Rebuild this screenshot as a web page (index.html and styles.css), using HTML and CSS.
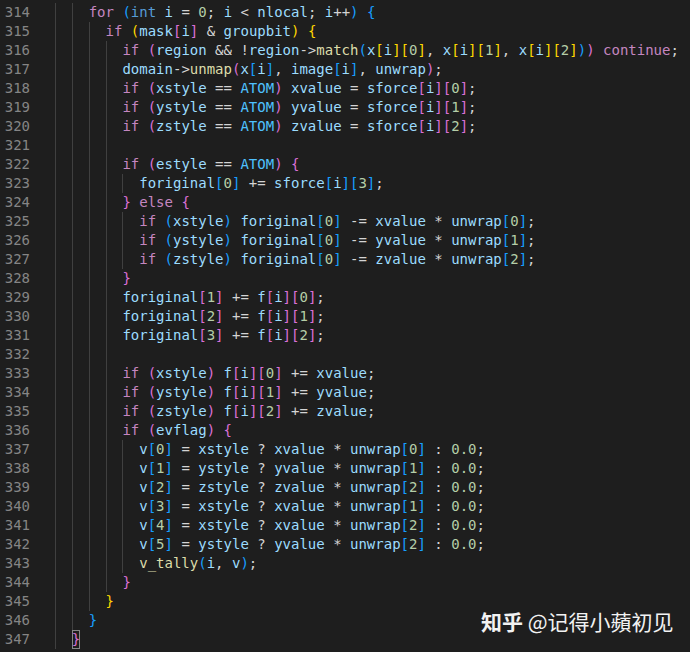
FILE: index.html
```html
<!DOCTYPE html>
<html lang="en">
<head>
<meta charset="utf-8">
<title>Editor</title>
<link rel="stylesheet" href="styles.css">
</head>
<body>
<div class="editor">
  <div class="ln">
    <div>314</div><div>315</div><div>316</div><div>317</div><div>318</div><div>319</div><div>320</div><div>321</div><div>322</div><div>323</div><div>324</div><div>325</div><div>326</div><div>327</div><div>328</div><div>329</div><div>330</div><div>331</div><div>332</div><div>333</div><div>334</div><div>335</div><div>336</div><div>337</div><div>338</div><div>339</div><div>340</div><div>341</div><div>342</div><div>343</div><div>344</div><div>345</div><div>346</div><div>347</div>
  </div>
  <div class="code">
<div class="row"><i class="g"></i><i class="g"></i><span class="k">for</span> <span class="b3">(</span><span class="t">int</span> <span class="v">i</span> = <span class="n">0</span>; <span class="v">i</span> &lt; <span class="v">nlocal</span>; <span class="v">i</span>++<span class="b3">)</span> <span class="b3">{</span></div>
<div class="row"><i class="g"></i><i class="g"></i><i class="g"></i><span class="k">if</span> <span class="b1">(</span><span class="v">mask</span><span class="b2">[</span><span class="v">i</span><span class="b2">]</span> &amp; <span class="v">groupbit</span><span class="b1">)</span> <span class="b1">{</span></div>
<div class="row"><i class="g"></i><i class="g"></i><i class="g"></i><i class="g"></i><span class="k">if</span> <span class="b2">(</span><span class="v">region</span> &amp;&amp; !<span class="v">region</span>-&gt;<span class="f">match</span><span class="b3">(</span><span class="v">x</span><span class="b1">[</span><span class="v">i</span><span class="b1">][</span><span class="n">0</span><span class="b1">]</span>, <span class="v">x</span><span class="b1">[</span><span class="v">i</span><span class="b1">][</span><span class="n">1</span><span class="b1">]</span>, <span class="v">x</span><span class="b1">[</span><span class="v">i</span><span class="b1">][</span><span class="n">2</span><span class="b1">]</span><span class="b3">)</span><span class="b2">)</span> <span class="k">continue</span>;</div>
<div class="row"><i class="g"></i><i class="g"></i><i class="g"></i><i class="g"></i><span class="v">domain</span>-&gt;<span class="f">unmap</span><span class="b2">(</span><span class="v">x</span><span class="b3">[</span><span class="v">i</span><span class="b3">]</span>, <span class="v">image</span><span class="b3">[</span><span class="v">i</span><span class="b3">]</span>, <span class="v">unwrap</span><span class="b2">)</span>;</div>
<div class="row"><i class="g"></i><i class="g"></i><i class="g"></i><i class="g"></i><span class="k">if</span> <span class="b2">(</span><span class="v">xstyle</span> == <span class="c">ATOM</span><span class="b2">)</span> <span class="v">xvalue</span> = <span class="v">sforce</span><span class="b2">[</span><span class="v">i</span><span class="b2">][</span><span class="n">0</span><span class="b2">]</span>;</div>
<div class="row"><i class="g"></i><i class="g"></i><i class="g"></i><i class="g"></i><span class="k">if</span> <span class="b2">(</span><span class="v">ystyle</span> == <span class="c">ATOM</span><span class="b2">)</span> <span class="v">yvalue</span> = <span class="v">sforce</span><span class="b2">[</span><span class="v">i</span><span class="b2">][</span><span class="n">1</span><span class="b2">]</span>;</div>
<div class="row"><i class="g"></i><i class="g"></i><i class="g"></i><i class="g"></i><span class="k">if</span> <span class="b2">(</span><span class="v">zstyle</span> == <span class="c">ATOM</span><span class="b2">)</span> <span class="v">zvalue</span> = <span class="v">sforce</span><span class="b2">[</span><span class="v">i</span><span class="b2">][</span><span class="n">2</span><span class="b2">]</span>;</div>
<div class="row"><i class="g"></i><i class="g"></i><i class="g"></i><i class="g"></i></div>
<div class="row"><i class="g"></i><i class="g"></i><i class="g"></i><i class="g"></i><span class="k">if</span> <span class="b2">(</span><span class="v">estyle</span> == <span class="c">ATOM</span><span class="b2">)</span> <span class="b2">{</span></div>
<div class="row"><i class="g"></i><i class="g"></i><i class="g"></i><i class="g"></i><i class="g"></i><span class="v">foriginal</span><span class="b3">[</span><span class="n">0</span><span class="b3">]</span> += <span class="v">sforce</span><span class="b3">[</span><span class="v">i</span><span class="b3">][</span><span class="n">3</span><span class="b3">]</span>;</div>
<div class="row"><i class="g"></i><i class="g"></i><i class="g"></i><i class="g"></i><span class="b2">}</span> <span class="k">else</span> <span class="b2">{</span></div>
<div class="row"><i class="g"></i><i class="g"></i><i class="g"></i><i class="g"></i><i class="g"></i><span class="k">if</span> <span class="b3">(</span><span class="v">xstyle</span><span class="b3">)</span> <span class="v">foriginal</span><span class="b3">[</span><span class="n">0</span><span class="b3">]</span> -= <span class="v">xvalue</span> * <span class="v">unwrap</span><span class="b3">[</span><span class="n">0</span><span class="b3">]</span>;</div>
<div class="row"><i class="g"></i><i class="g"></i><i class="g"></i><i class="g"></i><i class="g"></i><span class="k">if</span> <span class="b3">(</span><span class="v">ystyle</span><span class="b3">)</span> <span class="v">foriginal</span><span class="b3">[</span><span class="n">0</span><span class="b3">]</span> -= <span class="v">yvalue</span> * <span class="v">unwrap</span><span class="b3">[</span><span class="n">1</span><span class="b3">]</span>;</div>
<div class="row"><i class="g"></i><i class="g"></i><i class="g"></i><i class="g"></i><i class="g"></i><span class="k">if</span> <span class="b3">(</span><span class="v">zstyle</span><span class="b3">)</span> <span class="v">foriginal</span><span class="b3">[</span><span class="n">0</span><span class="b3">]</span> -= <span class="v">zvalue</span> * <span class="v">unwrap</span><span class="b3">[</span><span class="n">2</span><span class="b3">]</span>;</div>
<div class="row"><i class="g"></i><i class="g"></i><i class="g"></i><i class="g"></i><span class="b2">}</span></div>
<div class="row"><i class="g"></i><i class="g"></i><i class="g"></i><i class="g"></i><span class="v">foriginal</span><span class="b2">[</span><span class="n">1</span><span class="b2">]</span> += <span class="v">f</span><span class="b2">[</span><span class="v">i</span><span class="b2">][</span><span class="n">0</span><span class="b2">]</span>;</div>
<div class="row"><i class="g"></i><i class="g"></i><i class="g"></i><i class="g"></i><span class="v">foriginal</span><span class="b2">[</span><span class="n">2</span><span class="b2">]</span> += <span class="v">f</span><span class="b2">[</span><span class="v">i</span><span class="b2">][</span><span class="n">1</span><span class="b2">]</span>;</div>
<div class="row"><i class="g"></i><i class="g"></i><i class="g"></i><i class="g"></i><span class="v">foriginal</span><span class="b2">[</span><span class="n">3</span><span class="b2">]</span> += <span class="v">f</span><span class="b2">[</span><span class="v">i</span><span class="b2">][</span><span class="n">2</span><span class="b2">]</span>;</div>
<div class="row"><i class="g"></i><i class="g"></i><i class="g"></i><i class="g"></i></div>
<div class="row"><i class="g"></i><i class="g"></i><i class="g"></i><i class="g"></i><span class="k">if</span> <span class="b2">(</span><span class="v">xstyle</span><span class="b2">)</span> <span class="v">f</span><span class="b2">[</span><span class="v">i</span><span class="b2">][</span><span class="n">0</span><span class="b2">]</span> += <span class="v">xvalue</span>;</div>
<div class="row"><i class="g"></i><i class="g"></i><i class="g"></i><i class="g"></i><span class="k">if</span> <span class="b2">(</span><span class="v">ystyle</span><span class="b2">)</span> <span class="v">f</span><span class="b2">[</span><span class="v">i</span><span class="b2">][</span><span class="n">1</span><span class="b2">]</span> += <span class="v">yvalue</span>;</div>
<div class="row"><i class="g"></i><i class="g"></i><i class="g"></i><i class="g"></i><span class="k">if</span> <span class="b2">(</span><span class="v">zstyle</span><span class="b2">)</span> <span class="v">f</span><span class="b2">[</span><span class="v">i</span><span class="b2">][</span><span class="n">2</span><span class="b2">]</span> += <span class="v">zvalue</span>;</div>
<div class="row"><i class="g"></i><i class="g"></i><i class="g"></i><i class="g"></i><span class="k">if</span> <span class="b2">(</span><span class="v">evflag</span><span class="b2">)</span> <span class="b2">{</span></div>
<div class="row"><i class="g"></i><i class="g"></i><i class="g"></i><i class="g"></i><i class="g"></i><span class="v">v</span><span class="b3">[</span><span class="n">0</span><span class="b3">]</span> = <span class="v">xstyle</span> ? <span class="v">xvalue</span> * <span class="v">unwrap</span><span class="b3">[</span><span class="n">0</span><span class="b3">]</span> : <span class="n">0.0</span>;</div>
<div class="row"><i class="g"></i><i class="g"></i><i class="g"></i><i class="g"></i><i class="g"></i><span class="v">v</span><span class="b3">[</span><span class="n">1</span><span class="b3">]</span> = <span class="v">ystyle</span> ? <span class="v">yvalue</span> * <span class="v">unwrap</span><span class="b3">[</span><span class="n">1</span><span class="b3">]</span> : <span class="n">0.0</span>;</div>
<div class="row"><i class="g"></i><i class="g"></i><i class="g"></i><i class="g"></i><i class="g"></i><span class="v">v</span><span class="b3">[</span><span class="n">2</span><span class="b3">]</span> = <span class="v">zstyle</span> ? <span class="v">zvalue</span> * <span class="v">unwrap</span><span class="b3">[</span><span class="n">2</span><span class="b3">]</span> : <span class="n">0.0</span>;</div>
<div class="row"><i class="g"></i><i class="g"></i><i class="g"></i><i class="g"></i><i class="g"></i><span class="v">v</span><span class="b3">[</span><span class="n">3</span><span class="b3">]</span> = <span class="v">xstyle</span> ? <span class="v">xvalue</span> * <span class="v">unwrap</span><span class="b3">[</span><span class="n">1</span><span class="b3">]</span> : <span class="n">0.0</span>;</div>
<div class="row"><i class="g"></i><i class="g"></i><i class="g"></i><i class="g"></i><i class="g"></i><span class="v">v</span><span class="b3">[</span><span class="n">4</span><span class="b3">]</span> = <span class="v">xstyle</span> ? <span class="v">xvalue</span> * <span class="v">unwrap</span><span class="b3">[</span><span class="n">2</span><span class="b3">]</span> : <span class="n">0.0</span>;</div>
<div class="row"><i class="g"></i><i class="g"></i><i class="g"></i><i class="g"></i><i class="g"></i><span class="v">v</span><span class="b3">[</span><span class="n">5</span><span class="b3">]</span> = <span class="v">ystyle</span> ? <span class="v">yvalue</span> * <span class="v">unwrap</span><span class="b3">[</span><span class="n">2</span><span class="b3">]</span> : <span class="n">0.0</span>;</div>
<div class="row"><i class="g"></i><i class="g"></i><i class="g"></i><i class="g"></i><i class="g"></i><span class="f">v_tally</span><span class="b3">(</span><span class="v">i</span>, <span class="v">v</span><span class="b3">)</span>;</div>
<div class="row"><i class="g"></i><i class="g"></i><i class="g"></i><i class="g"></i><span class="b2">}</span></div>
<div class="row"><i class="g"></i><i class="g"></i><i class="g"></i><span class="b1">}</span></div>
<div class="row"><i class="g"></i><i class="g"></i><span class="b3">}</span></div>
<div class="row"><i class="g"></i><span class="b2 match">}</span></div>
  </div>
  <div class="watermark"><span class="zh">知乎</span> @记得小蘋初见</div>
</div>
</body>
</html>
```
FILE: styles.css
```css
html, body {
  margin: 0;
  padding: 0;
  background: #1e1e1e;
}
.editor {
  position: relative;
  width: 690px;
  height: 652px;
  overflow: hidden;
  display: flex;
  align-items: flex-start;
  background: #1e1e1e;
  font-family: "DejaVu Sans Mono", monospace;
  font-size: 14px;
  line-height: 19px;
  padding-top: 3px;
  box-sizing: border-box;
}
.ln {
  width: 30px;
  flex: none;
  text-align: right;
  color: #858585;
}
.code {
  margin-left: 25px;
  color: #d4d4d4;
}
.row {
  height: 19px;
  white-space: pre;
}
.g {
  display: inline-block;
  width: 2ch;
  height: 19px;
  vertical-align: top;
  box-shadow: inset 1px 0 0 #404040;
}
.k { color: #c586c0; }
.t { color: #569cd6; }
.v { color: #9cdcfe; }
.f { color: #dcdcaa; }
.n { color: #b5cea8; }
.c { color: #4fc1ff; }
.b1 { color: #ffd700; }
.b2 { color: #da70d6; }
.b3 { color: #179fff; }
.match {
  display: inline-block;
  height: 19px;
  vertical-align: top;
  box-shadow: inset 0 0 0 1px #888888;
}
.watermark {
  position: absolute;
  left: 481px;
  top: 607px;
  font-family: "Noto Sans CJK SC", sans-serif;
  font-size: 21px;
  line-height: 28px;
  color: #f2f2f2;
  white-space: pre;
}
.zh {
  font-weight: 700;
}
```
